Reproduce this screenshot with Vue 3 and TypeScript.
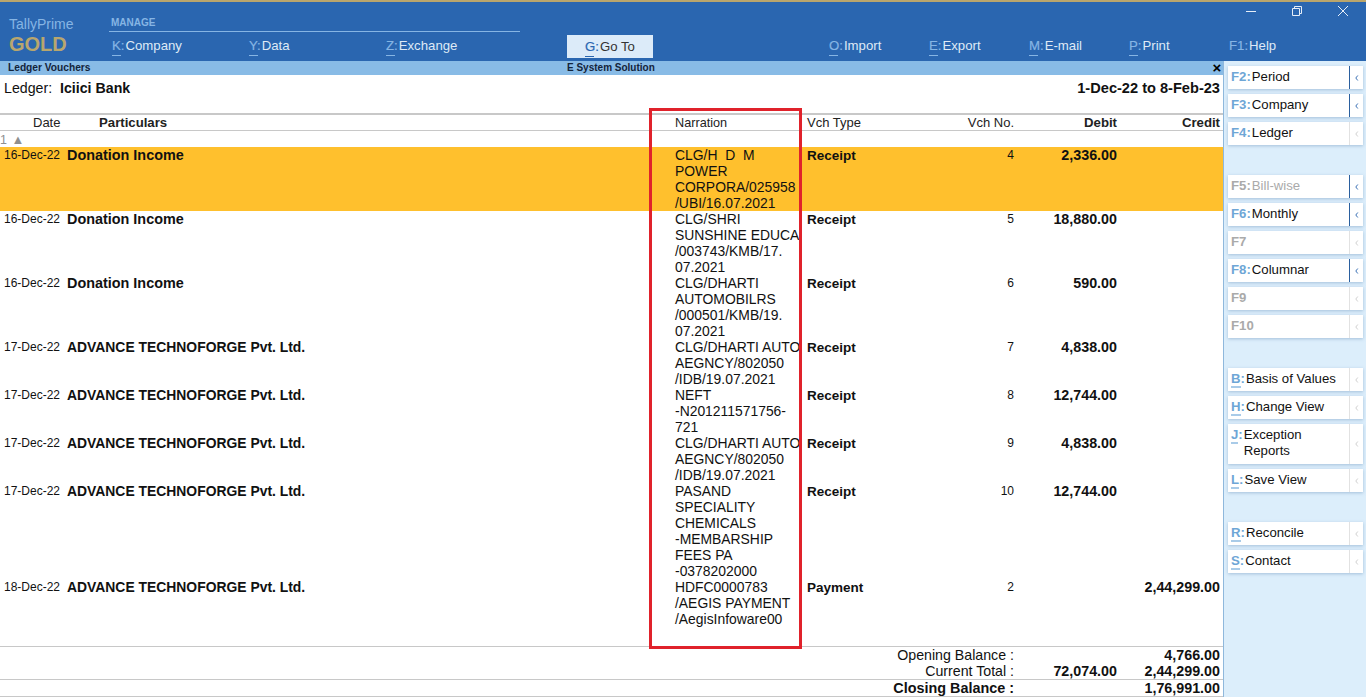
<script setup lang="ts">
interface Row { date: string; part: string; narr: string[]; type: string; no: string; debit?: string; credit?: string; hl?: boolean; caps?: boolean }
const adv = 'ADVANCE TECHNOFORGE Pvt. Ltd.'
const rows: Row[] = [
  { date: '16-Dec-22', part: 'Donation Income', narr: ['CLG/H  D  M', 'POWER', 'CORPORA/025958', '/UBI/16.07.2021'], type: 'Receipt', no: '4', debit: '2,336.00', hl: true },
  { date: '16-Dec-22', part: 'Donation Income', narr: ['CLG/SHRI', 'SUNSHINE EDUCA', '/003743/KMB/17.', '07.2021'], type: 'Receipt', no: '5', debit: '18,880.00' },
  { date: '16-Dec-22', part: 'Donation Income', narr: ['CLG/DHARTI', 'AUTOMOBILRS', '/000501/KMB/19.', '07.2021'], type: 'Receipt', no: '6', debit: '590.00' },
  { date: '17-Dec-22', part: adv, caps: true, narr: ['CLG/DHARTI AUTO', 'AEGNCY/802050', '/IDB/19.07.2021'], type: 'Receipt', no: '7', debit: '4,838.00' },
  { date: '17-Dec-22', part: adv, caps: true, narr: ['NEFT', '-N201211571756-', '721'], type: 'Receipt', no: '8', debit: '12,744.00' },
  { date: '17-Dec-22', part: adv, caps: true, narr: ['CLG/DHARTI AUTO', 'AEGNCY/802050', '/IDB/19.07.2021'], type: 'Receipt', no: '9', debit: '4,838.00' },
  { date: '17-Dec-22', part: adv, caps: true, narr: ['PASAND', 'SPECIALITY', 'CHEMICALS', '-MEMBARSHIP', 'FEES PA', '-0378202000'], type: 'Receipt', no: '10', debit: '12,744.00' },
  { date: '18-Dec-22', part: adv, caps: true, narr: ['HDFC0000783', '/AEGIS PAYMENT', '/AegisInfoware00'], type: 'Payment', no: '2', credit: '2,44,299.00' },
]
const manage = [
  { k: 'K', l: 'Company' },
  { k: 'Y', l: 'Data' },
  { k: 'Z', l: 'Exchange' },
]
const actions = [
  { k: 'O', l: 'Import' },
  { k: 'E', l: 'Export' },
  { k: 'M', l: 'E-mail' },
  { k: 'P', l: 'Print' },
]
interface Btn { k: string; l?: string; dim?: boolean; arrow?: boolean; u?: boolean; wrap?: boolean }
const groups: Btn[][] = [
  [
    { k: 'F2', l: 'Period', arrow: true },
    { k: 'F3', l: 'Company', arrow: true },
    { k: 'F4', l: 'Ledger' },
  ],
  [
    { k: 'F5', l: 'Bill-wise', dim: true, arrow: true },
    { k: 'F6', l: 'Monthly', arrow: true },
    { k: 'F7', dim: true },
    { k: 'F8', l: 'Columnar', arrow: true },
    { k: 'F9', dim: true },
    { k: 'F10', dim: true },
  ],
  [
    { k: 'B', l: 'Basis of Values', u: true },
    { k: 'H', l: 'Change View', u: true },
    { k: 'J', l: 'Exception Reports', u: true, wrap: true },
    { k: 'L', l: 'Save View', u: true },
  ],
  [
    { k: 'R', l: 'Reconcile', u: true },
    { k: 'S', l: 'Contact', u: true },
  ],
]
</script>

<template>
  <div class="app">
    <header class="top">
      <div class="brand">
        <div class="tally">TallyPrime</div>
        <div class="gold">GOLD</div>
      </div>
      <div class="manage">
        <div class="manage-title">MANAGE</div>
        <nav class="manage-items">
          <a v-for="m in manage" :key="m.k" class="nav-item manage-item"><span class="hk">{{ m.k }}:</span>{{ m.l }}</a>
        </nav>
      </div>
      <a class="goto"><span class="hk">G:</span>Go To</a>
      <div class="right">
        <div class="winctl">
          <svg width="12" height="12" viewBox="0 0 12 12"><path d="M1 6.5h10" stroke="#e6eef8" fill="none" /></svg>
          <svg width="12" height="12" viewBox="0 0 12 12"><path d="M1.5 3.5h7v7h-7zM3.5 3.5v-2h7v7h-2" stroke="#e6eef8" fill="none" /></svg>
          <svg width="12" height="12" viewBox="0 0 12 12"><path d="M1 1l10 10M11 1L1 11" stroke="#e6eef8" fill="none" /></svg>
        </div>
        <nav class="actions">
          <a v-for="a in actions" :key="a.k" class="nav-item action"><span class="hk">{{ a.k }}:</span>{{ a.l }}</a>
          <a class="nav-item action"><span class="hk plain">F1:</span>Help</a>
        </nav>
      </div>
    </header>

    <div class="main">
      <section class="content">
        <div class="subbar">
          <span>Ledger Vouchers</span>
          <span class="sub-c">E System Solution</span>
          <span class="sub-x">×</span>
        </div>
        <div class="ledger">
          <span>Ledger:&nbsp; <b>Iciici Bank</b></span>
          <b class="period">1-Dec-22 to 8-Feb-23</b>
        </div>
        <div class="grid head">
          <span class="c-date">Date</span>
          <b class="c-part">Particulars</b>
          <span class="c-narr">Narration</span>
          <span class="c-type">Vch Type</span>
          <span class="c-no">Vch No.</span>
          <b class="c-amt">Debit</b>
          <b class="c-amt">Credit</b>
        </div>
        <div class="pager">1 <span class="tri">▲</span></div>
        <div class="rows">
          <div v-for="(r, i) in rows" :key="i" class="grid row" :class="{ hl: r.hl }">
            <span class="date">{{ r.date }}</span>
            <b class="part" :class="{ caps: r.caps }">{{ r.part }}</b>
            <div class="narr"><div v-for="(n, j) in r.narr" :key="j">{{ n }}</div></div>
            <b class="type">{{ r.type }}</b>
            <span class="no">{{ r.no }}</span>
            <b class="amt">{{ r.debit }}</b>
            <b class="amt">{{ r.credit }}</b>
          </div>
        </div>
        <div class="totals">
          <div class="tot-line"><span class="tot-label">Opening Balance :</span><b></b><b>4,766.00</b></div>
          <div class="tot-line"><span class="tot-label">Current Total :</span><b>72,074.00</b><b>2,44,299.00</b></div>
        </div>
        <div class="closing">
          <div class="tot-line"><b class="tot-label">Closing Balance :</b><b></b><b>1,76,991.00</b></div>
        </div>
        <div class="redbox"></div>
      </section>

      <aside class="side">
        <div v-for="(g, gi) in groups" :key="gi" class="group">
          <div v-for="b in g" :key="b.k" class="btn" :class="{ tall: b.wrap, dim: b.dim }">
            <div class="btn-text">
              <span class="fk"><span :class="{ ul: b.u }">{{ b.k }}</span><template v-if="b.l">:</template></span>
              <span class="fl">{{ b.l }}</span>
            </div>
            <div class="arrow" :class="{ on: b.arrow }">
              <svg width="5" height="8" viewBox="0 0 5 8"><path d="M3.8 1.5L1.8 4L3.8 6.5" fill="none" stroke="currentColor" stroke-width="1" /></svg>
            </div>
          </div>
        </div>
      </aside>
    </div>
  </div>
</template>

<style>
html, body { margin: 0; padding: 0; background: #fff; overflow: hidden; }
</style>

<style scoped>
.app {
  width: 1366px;
  height: 697px;
  display: flex;
  flex-direction: column;
  overflow: hidden;
  font-family: "Liberation Sans", Arial, sans-serif;
  font-size: 12px;
  color: #111;
}
.top {
  height: 61px;
  box-sizing: border-box;
  flex: none;
  display: flex;
  background: #2a66b0;
  border-top: 2px solid #b9a56c;
  color: #dfeaf6;
}
.brand { width: 109px; padding: 14px 0 0 9px; box-sizing: border-box; flex: none; }
.tally { font-size: 14px; line-height: 17px; color: #86b5e4; }
.gold { font-size: 20px; line-height: 23px; font-weight: 700; color: #b8a66e; }
.manage { width: 411px; flex: none; padding-top: 13px; box-sizing: border-box; }
.manage-title {
  font-size: 10px;
  font-weight: 700;
  line-height: 15px;
  height: 16px;
  padding-left: 2px;
  color: #86b5e4;
  border-bottom: 1px solid #86b5e4;
  box-sizing: content-box;
}
.manage-items { display: flex; padding-left: 3px; margin-top: 5px; }
.nav-item { font-size: 13.2px; line-height: 17px; white-space: nowrap; }
.manage-item { width: 137px; flex: none; }
.hk {
  color: #86b5e4;
  margin-right: 1px;
  background: linear-gradient(#86b5e4, #86b5e4) left bottom / 9px 1px no-repeat;
  padding-bottom: 3px;
  -webkit-text-stroke: 0.2px currentColor;
}
.hk.plain { background: none; }
.goto {
  width: 86px;
  height: 23px;
  box-sizing: border-box;
  flex: none;
  margin: 33px 0 0 47px;
  padding-top: 3px;
  background: #dcebf9;
  color: #333;
  font-size: 13.2px;
  line-height: 17px;
  text-align: center;
}
.goto .hk { color: #2a66b0; background-image: linear-gradient(#2a66b0, #2a66b0); }
.right { flex: 1; display: flex; flex-direction: column; margin-left: 176px; }
.winctl { display: flex; justify-content: flex-end; gap: 34px; padding: 3px 17px 0 0; height: 12px; }
.actions { display: flex; margin-top: 20px; }
.action { width: 100px; flex: none; }

.main { flex: 1; display: flex; min-height: 0; }
.content { width: 1223px; flex: none; display: flex; flex-direction: column; position: relative; }
.subbar {
  height: 14px;
  flex: none;
  background: #88bbe6;
  display: grid;
  grid-template-columns: 559px 1fr 12px;
  padding-left: 8px;
  box-sizing: border-box;
  font-size: 10.2px;
  font-weight: 700;
  line-height: 14px;
  color: #13233a;
  white-space: nowrap;
}
.sub-c { font-size: 10px; }
.sub-x { font-size: 15px; color: #000; line-height: 14px; text-align: center; }
.ledger {
  height: 38px;
  flex: none;
  box-sizing: border-box;
  padding: 5px 3px 0 4px;
  display: flex;
  justify-content: space-between;
  font-size: 14.2px;
  line-height: 16px;
}
.period { font-size: 14.6px; }
.grid {
  display: grid;
  grid-template-columns: 67px 608px 132px 123px 84px 103px 103px;
  padding-right: 3px;
}
.head {
  height: 18px;
  flex: none;
  box-sizing: border-box;
  border-top: 2px solid #c8c8c8;
  border-bottom: 1px solid #c8c8c8;
  font-size: 13px;
  line-height: 15px;
  color: #222;
}
.c-date { padding-left: 33px; white-space: nowrap; }
.c-part { padding-left: 32px; font-size: 13.2px; white-space: nowrap; }
.c-narr { font-size: 12.7px; padding-top: 1px; }
.c-no, .c-amt { text-align: right; }
.c-amt { font-size: 13.2px; }
.pager {
  height: 16px;
  flex: none;
  line-height: 17px;
  color: #8f8f8f;
  font-size: 12.5px;
}
.tri { font-size: 13px; margin-left: 1px; }
.rows { flex: 1; min-height: 0; }
.row { line-height: 16px; font-size: 12px; }
.row.hl { background: #ffc02d; }
.date { padding-left: 4px; white-space: nowrap; }
.part { font-size: 14.4px; white-space: nowrap; }
.part.caps { font-size: 13.9px; }
.narr { font-size: 13.9px; white-space: pre; }
.type { font-size: 13.5px; padding-top: 1px; }
.no { text-align: right; }
.amt { text-align: right; font-size: 14.3px; }
.totals {
  flex: none;
  height: 34px;
  box-sizing: border-box;
  border-top: 1px solid #c8c8c8;
  border-bottom: 1px solid #c8c8c8;
}
.closing {
  flex: none;
  height: 17px;
  box-sizing: border-box;
  border-bottom: 1px solid #c8c8c8;
}
.tot-line {
  display: grid;
  grid-template-columns: 1014px 103px 103px;
  height: 16px;
  line-height: 16px;
  font-size: 14.3px;
}
.tot-line b { text-align: right; }
.tot-label { text-align: right; font-size: 14.2px; }
.tot-line b.tot-label { font-size: 14.4px; }
.redbox {
  position: absolute;
  left: 649px;
  top: 47px;
  width: 153px;
  height: 541px;
  box-sizing: border-box;
  border: 3px solid #e0222b;
  pointer-events: none;
}

.side {
  flex: 1;
  box-sizing: border-box;
  background: #dceefb;
  border-left: 1px solid #8fb8dc;
  padding: 5px 3px 0 4px;
  display: flex;
  flex-direction: column;
  gap: 30px;
}
.group { display: flex; flex-direction: column; gap: 5px; }
.btn {
  height: 23px;
  background: #fff;
  display: flex;
  box-shadow: 0 1px 3px rgba(110, 150, 190, 0.5);
  font-size: 13.2px;
  line-height: 16px;
  color: #111;
}
.btn.tall { height: 40px; }
.btn-text { flex: 1; display: flex; padding: 3px 0 0 3px; min-width: 0; }
.fk { color: #6ea6d6; font-weight: 700; flex: none; margin-right: 1px; }
.ul { display: inline-block; border-bottom: 2px solid #a9cbe8; line-height: 15px; }
.fl { line-height: 16px; }
.btn.dim .fk, .btn.dim .fl { color: #aaa; }
.arrow {
  width: 13px;
  flex: none;
  display: flex;
  align-items: center;
  justify-content: center;
  border-left: 1px solid #e2e2e2;
  color: #d0d0d0;
}
.arrow.on { border-left-color: #2a5f9e; color: #3a70b5; }
</style>
